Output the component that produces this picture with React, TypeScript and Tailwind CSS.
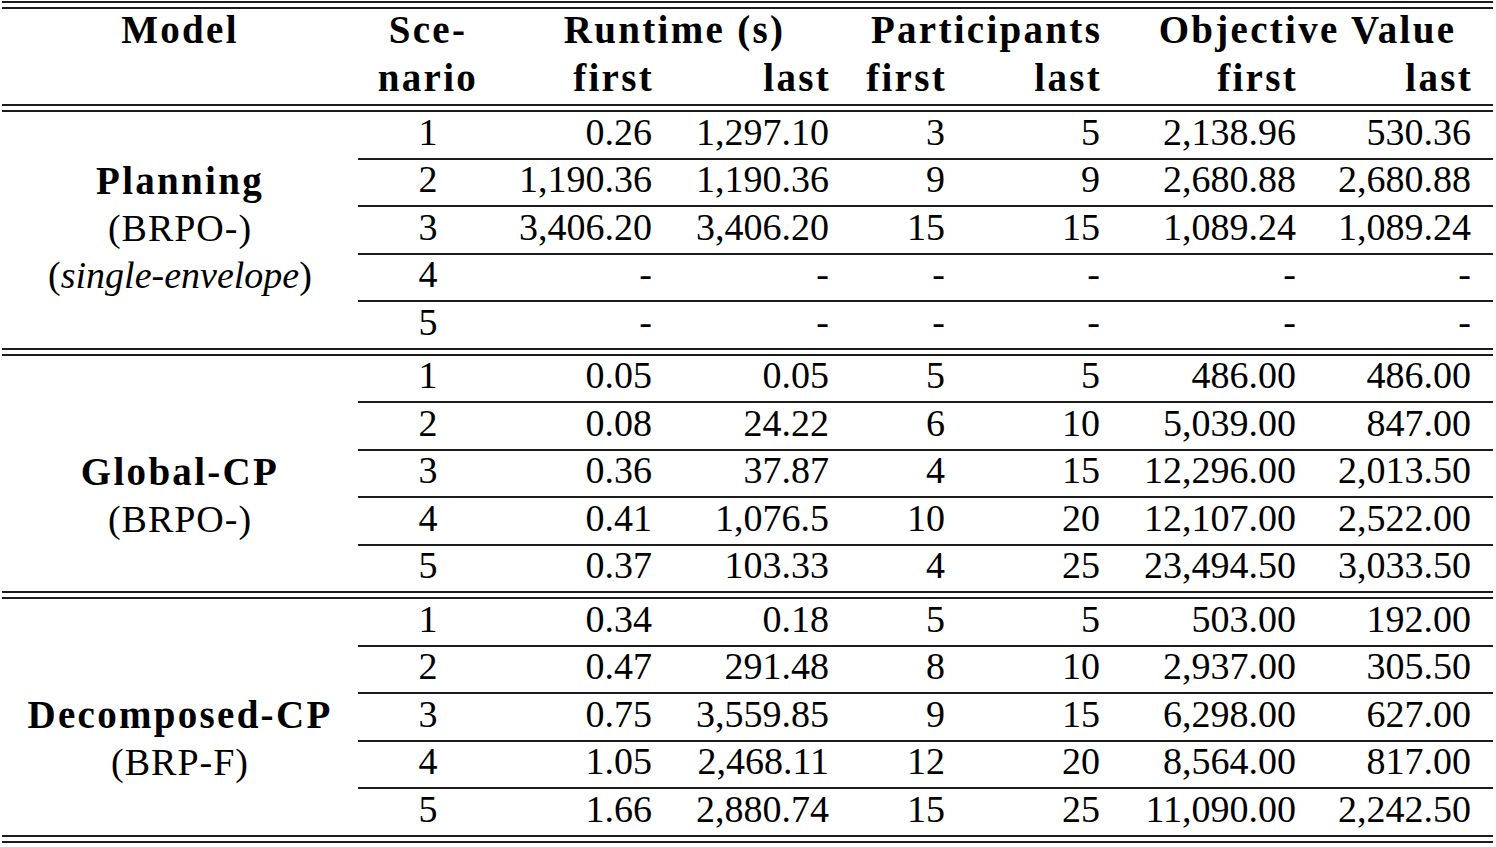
import React from "react";

// column widths include the 22px side padding, like LaTeX's tabcolsep
const cols = "grid grid-cols-[356px_140px_176px_177px_116px_155px_196px_175px]";
const bold = "font-bold text-[39px] tracking-[2.3px]";

type Label = { text: string; kind: "bold" | "plain" | "italic" } | null;

const groups: { labels: Label[]; rows: string[][] }[] = [
  {
    labels: [
      null,
      { text: "Planning", kind: "bold" },
      { text: "(BRPO-)", kind: "plain" },
      { text: "single-envelope", kind: "italic" },
      null,
    ],
    rows: [
      ["1", "0.26", "1,297.10", "3", "5", "2,138.96", "530.36"],
      ["2", "1,190.36", "1,190.36", "9", "9", "2,680.88", "2,680.88"],
      ["3", "3,406.20", "3,406.20", "15", "15", "1,089.24", "1,089.24"],
      ["4", "-", "-", "-", "-", "-", "-"],
      ["5", "-", "-", "-", "-", "-", "-"],
    ],
  },
  {
    labels: [null, null, { text: "Global-CP", kind: "bold" }, { text: "(BRPO-)", kind: "plain" }, null],
    rows: [
      ["1", "0.05", "0.05", "5", "5", "486.00", "486.00"],
      ["2", "0.08", "24.22", "6", "10", "5,039.00", "847.00"],
      ["3", "0.36", "37.87", "4", "15", "12,296.00", "2,013.50"],
      ["4", "0.41", "1,076.5", "10", "20", "12,107.00", "2,522.00"],
      ["5", "0.37", "103.33", "4", "25", "23,494.50", "3,033.50"],
    ],
  },
  {
    labels: [null, null, { text: "Decomposed-CP", kind: "bold" }, { text: "(BRP-F)", kind: "plain" }, null],
    rows: [
      ["1", "0.34", "0.18", "5", "5", "503.00", "192.00"],
      ["2", "0.47", "291.48", "8", "10", "2,937.00", "305.50"],
      ["3", "0.75", "3,559.85", "9", "15", "6,298.00", "627.00"],
      ["4", "1.05", "2,468.11", "12", "20", "8,564.00", "817.00"],
      ["5", "1.66", "2,880.74", "15", "25", "11,090.00", "2,242.50"],
    ],
  },
];

function DoubleRule() {
  return <div className="h-[8px] border-y-2 border-[#1c1c1c]" />;
}

function ModelLabel({ label }: { label: Label }) {
  if (!label) return null;
  if (label.kind === "bold") return <span className={bold}>{label.text}</span>;
  if (label.kind === "italic")
    return (
      <span>
        (<span className="italic">single</span>-<span className="italic">envelope</span>)
      </span>
    );
  return <span className="tracking-[1px]">{label.text}</span>;
}

function BodyRow({ label, row, last }: { label: Label; row: string[]; last: boolean }) {
  const h = last ? "h-[45.5px]" : "h-[47.5px]";
  const line = last ? "" : "border-b-2 border-[#1c1c1c]";
  return (
    <div className={cols}>
      <div className={`${h} flex items-center justify-center pb-[6px] whitespace-nowrap`}>
        <ModelLabel label={label} />
      </div>
      <div className={`${h} ${line} flex items-center justify-center pb-[6px]`}>{row[0]}</div>
      {row.slice(1).map((v, i) => (
        <div key={i} className={`${h} ${line} flex items-center justify-end px-[22px] pb-[6px]`}>
          {v}
        </div>
      ))}
    </div>
  );
}

export default function App() {
  return (
    <div className="min-h-screen bg-white pt-[1px] text-black font-['Liberation_Serif',serif] text-[38px] leading-none">
      <div className="ml-[2px] w-[1491px]">
        <DoubleRule />

        {/* header */}
        <div className={cols}>
          <div className={`h-[47.5px] flex items-center justify-center pb-[6px] ${bold}`}>Model</div>
          <div className={`h-[47.5px] flex items-center justify-center pb-[6px] ${bold}`}>Sce-</div>
          <div className={`col-span-2 h-[47.5px] flex items-center justify-center pb-[6px] ${bold}`}>Runtime (s)</div>
          <div className={`col-span-2 h-[47.5px] flex items-center justify-center pb-[6px] ${bold}`}>Participants</div>
          <div className={`col-span-2 h-[47.5px] flex items-center justify-center pb-[6px] ${bold}`}>Objective Value</div>
        </div>
        <div className={cols}>
          <div className="h-[47.5px]" />
          <div className={`h-[47.5px] flex items-center justify-center pb-[6px] ${bold}`}>nario</div>
          {["first", "last", "first", "last", "first", "last"].map((t, i) => (
            <div key={i} className={`h-[47.5px] flex items-center justify-end px-[20px] pb-[6px] ${bold}`}>
              {t}
            </div>
          ))}
        </div>
        <DoubleRule />

        {groups.map((g, gi) => (
          <div key={gi}>
            {g.rows.map((r, ri) => (
              <BodyRow key={ri} label={g.labels[ri]} row={r} last={ri === g.rows.length - 1} />
            ))}
            <DoubleRule />
          </div>
        ))}
      </div>
    </div>
  );
}
